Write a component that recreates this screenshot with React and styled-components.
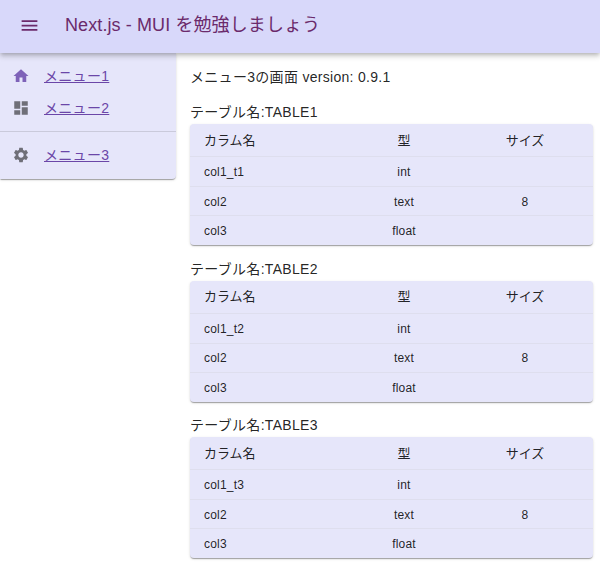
import React from "react";
import styled, { createGlobalStyle } from "styled-components";
import { MdDashboard, MdHome, MdMenu, MdSettings } from "react-icons/md";

const GlobalStyle = createGlobalStyle`
  body {
    margin: 0;
    background: #ffffff;
    color: rgba(0, 0, 0, 0.87);
    font-family: "Liberation Sans", "Noto Sans CJK JP", sans-serif;
  }
`;

const Header = styled.header`
  box-sizing: border-box;
  height: 53px;
  display: flex;
  align-items: center;
  padding: 0 0 3px 19px;
  background: #d8d8fa;
  color: #6b2a6b;
  box-shadow: 0 2px 4px -1px rgba(0, 0, 0, 0.2), 0 4px 5px rgba(0, 0, 0, 0.14);
  position: relative;
  z-index: 2;

  svg {
    font-size: 21px;
  }
`;

const AppTitle = styled.div`
  margin-left: 25px;
  font-size: 18px;
  line-height: 24px;
  letter-spacing: 0.1px;
`;

const Body = styled.div`
  display: flex;
  align-items: flex-start;
`;

const Side = styled.nav`
  width: 176px;
  flex: none;
  background: #e6e6fa;
  border-radius: 0 0 4px 0;
  box-shadow: 0 2px 1px -1px rgba(0, 0, 0, 0.2), 0 1px 1px rgba(0, 0, 0, 0.14), 0 1px 3px rgba(0, 0, 0, 0.12);
`;

const MenuGroup = styled.div`
  padding: ${(props) => props.$padding};
  border-top: ${(props) => (props.$divided ? "1px solid rgba(0, 0, 0, 0.12)" : "none")};
`;

const MenuItem = styled.div`
  height: 32px;
  display: flex;
  align-items: center;
  padding-left: 12px;
  gap: 14px;

  svg {
    font-size: 18px;
    flex: none;
    color: ${(props) => props.$iconColor};
  }

  a {
    color: #6b46a8;
    font-size: 14px;
    letter-spacing: 0.3px;
    line-height: 20px;
  }
`;

const Main = styled.main`
  flex: 1;
  padding: 12px 7px 0 14px;
  min-width: 0;
`;

const PageTitle = styled.div`
  font-size: 14px;
  line-height: 24px;
  letter-spacing: 0.3px;
  margin-bottom: 11px;
`;

const Section = styled.section`
  margin-bottom: 11.5px;
`;

const TableName = styled.div`
  font-size: 14px;
  line-height: 24px;
  letter-spacing: 0.3px;
`;

const Card = styled.div`
  background: #e6e6fa;
  border-radius: 4px;
  overflow: hidden;
  box-shadow: 0 2px 1px -1px rgba(0, 0, 0, 0.2), 0 1px 1px rgba(0, 0, 0, 0.14), 0 1px 3px rgba(0, 0, 0, 0.12);
`;

const Table = styled.table`
  width: 100%;
  border-collapse: separate;
  border-spacing: 0;
  table-layout: fixed;
`;

const Head = styled.th`
  box-sizing: border-box;
  height: 33px;
  padding: 0 0 2px ${(props) => (props.$first ? "14px" : "0")};
  width: ${(props) => props.$width};
  text-align: ${(props) => (props.$first ? "left" : "center")};
  font-size: 13px;
  font-weight: 400;
  color: rgba(0, 0, 0, 0.87);
  border-bottom: 1px solid #dedeee;
`;

const Cell = styled.td`
  box-sizing: border-box;
  height: 29px;
  padding: 1px 0 0 ${(props) => (props.$first ? "14px" : "0")};
  text-align: ${(props) => (props.$first ? "left" : "center")};
  font-size: 12px;
  letter-spacing: 0.2px;
  color: rgba(0, 0, 0, 0.87);
  border-bottom: 1px solid #dedeee;

  tr:first-child > & {
    height: 30px;
  }

  tr:last-child > & {
    border-bottom: none;
  }
`;

const tables = [
  { name: "TABLE1", first: "col1_t1" },
  { name: "TABLE2", first: "col1_t2" },
  { name: "TABLE3", first: "col1_t3" },
];

export default function App() {
  return (
    <>
      <GlobalStyle />
      <Header>
        <MdMenu />
        <AppTitle>Next.js - MUI を勉強しましょう</AppTitle>
      </Header>
      <Body>
        <Side>
          <MenuGroup $padding="7px 0 7px">
            <MenuItem $iconColor="#7e62b8">
              <MdHome />
              <a href="#menu1">メニュー1</a>
            </MenuItem>
            <MenuItem $iconColor="#6f6f78">
              <MdDashboard />
              <a href="#menu2">メニュー2</a>
            </MenuItem>
          </MenuGroup>
          <MenuGroup $divided $padding="7px 0 8px">
            <MenuItem $iconColor="#6f6f78">
              <MdSettings />
              <a href="#menu3">メニュー3</a>
            </MenuItem>
          </MenuGroup>
        </Side>
        <Main>
          <PageTitle>メニュー3の画面 version: 0.9.1</PageTitle>
          {tables.map((table) => (
            <Section key={table.name}>
              <TableName>テーブル名:{table.name}</TableName>
              <Card>
                <Table>
                  <thead>
                    <tr>
                      <Head $first $width="161px">カラム名</Head>
                      <Head $width="106px">型</Head>
                      <Head $width="136px">サイズ</Head>
                    </tr>
                  </thead>
                  <tbody>
                    <tr>
                      <Cell $first>{table.first}</Cell>
                      <Cell>int</Cell>
                      <Cell />
                    </tr>
                    <tr>
                      <Cell $first>col2</Cell>
                      <Cell>text</Cell>
                      <Cell>8</Cell>
                    </tr>
                    <tr>
                      <Cell $first>col3</Cell>
                      <Cell>float</Cell>
                      <Cell />
                    </tr>
                  </tbody>
                </Table>
              </Card>
            </Section>
          ))}
        </Main>
      </Body>
    </>
  );
}
